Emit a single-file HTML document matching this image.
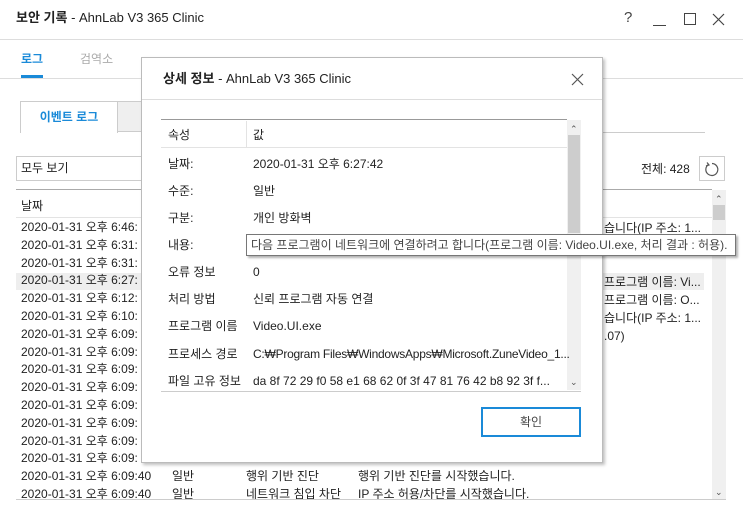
<!DOCTYPE html>
<html><head><meta charset="utf-8"><style>
*{margin:0;padding:0;box-sizing:border-box}
body{width:743px;height:519px;background:#fff;position:relative;overflow:hidden;font-family:"Liberation Sans","Noto Sans CJK KR",sans-serif;font-size:12px;line-height:16px;color:#222}
.a{position:absolute;white-space:nowrap;line-height:16px}
.l{position:absolute;background:#ddd}
</style></head><body>
<div class="a" style="left:16px;top:10px;font-size:13px"><b>보안 기록</b> - AhnLab V3 365 Clinic</div>
<div class="a" style="left:624px;top:10px;font-size:15px;color:#444">?</div>
<div class="l" style="left:653px;top:25px;width:13px;height:1px;background:#444"></div>
<div class="a" style="left:684px;top:13px;width:12px;height:12px;border:1px solid #444"></div>
<svg class="a" style="left:712px;top:13px" width="13" height="13"><path d="M1 1L12 12M12 1L1 12" stroke="#444" stroke-width="1.2"/></svg>
<div class="l" style="left:0;top:39px;width:743px;height:1px"></div>
<div class="a" style="left:21px;top:51px;color:#1a8ad8;font-weight:bold">로그</div>
<div class="a" style="left:80px;top:51px;color:#aaa">검역소</div>
<div class="l" style="left:21px;top:75px;width:22px;height:3px;background:#1a8ad8"></div>
<div class="l" style="left:0;top:78px;width:743px;height:1px"></div>
<div class="a" style="left:20px;top:101px;width:98px;height:32px;border:1px solid #ccc;border-bottom:none;background:#fff;color:#1a8ad8;text-align:center;line-height:30px;font-weight:bold">이벤트 로그</div>
<div class="a" style="left:117px;top:101px;width:40px;height:31px;border:1px solid #ccc;background:#efefef"></div>
<div class="l" style="left:157px;top:132px;width:548px;height:1px;background:#ccc"></div>
<div class="a" style="left:16px;top:156px;width:140px;height:25px;border:1px solid #ccc;line-height:23px;padding-left:4px">모두 보기</div>
<div class="a" style="left:641px;top:161px">전체: 428</div>
<div class="a" style="left:699px;top:156px;width:26px;height:25px;border:1px solid #ccc"></div>
<svg class="a" style="left:703px;top:160px" width="18" height="18"><path d="M5.5 4.5A6 6 0 1 0 9 3.5" fill="none" stroke="#555" stroke-width="1.2"/><path d="M4 2.5L6 5L3 6" fill="none" stroke="#555" stroke-width="1.2"/></svg>
<div class="l" style="left:16px;top:189px;width:696px;height:1px;background:#aaa"></div>
<div class="a" style="left:21px;top:198px">날짜</div>
<div class="l" style="left:16px;top:217px;width:696px;height:1px;background:#e3e3e3"></div>
<div class="a" style="left:712px;top:190px;width:14px;height:309px;background:#f0f0f0"></div>
<div class="a" style="left:713px;top:205px;width:12px;height:15px;background:#cdcdcd"></div>
<div class="a" style="left:715px;top:191px;font-size:9px;color:#555">⌃</div>
<div class="a" style="left:715px;top:484px;font-size:9px;color:#555">⌄</div>
<div class="l" style="left:16px;top:273px;width:688px;height:17px;background:#eee"></div>
<div id="rows"></div>
<div class="l" style="left:16px;top:499px;width:710px;height:1px;background:#ccc"></div>
<div class="a" style="left:604px;top:220px">습니다(IP 주소: 1...</div>
<div class="a" style="left:604px;top:274px">프로그램 이름: Vi...</div>
<div class="a" style="left:604px;top:292px">프로그램 이름: O...</div>
<div class="a" style="left:604px;top:310px">습니다(IP 주소: 1...</div>
<div class="a" style="left:604px;top:328px">.07)</div>

<div class="a" style="left:141px;top:57px;width:462px;height:406px;background:#fff;border:1px solid #bbb;box-shadow:2px 2px 3px rgba(0,0,0,.25)">
 <div class="a" style="left:21px;top:13px;font-size:13px"><b>상세 정보</b> - AhnLab V3 365 Clinic</div>
 <svg class="a" style="left:429px;top:15px" width="13" height="13"><path d="M1 1L12 12M12 1L1 12" stroke="#555" stroke-width="1.2"/></svg>
 <div class="l" style="left:0;top:41px;width:460px;height:1px"></div>
 <div class="l" style="left:19px;top:61px;width:406px;height:1px;background:#999"></div>
 <div class="a" style="left:425px;top:62px;width:14px;height:270px;background:#f0f0f0"></div>
 <div class="a" style="left:426px;top:77px;width:12px;height:98px;background:#cdcdcd"></div>
 <div class="a" style="left:428px;top:63px;font-size:9px;color:#555">⌃</div>
 <div class="a" style="left:428px;top:316px;font-size:9px;color:#555">⌄</div>
 <div class="l" style="left:104px;top:63px;width:1px;height:26px;background:#e3e3e3"></div>
 <div class="l" style="left:19px;top:89px;width:406px;height:1px;background:#e3e3e3"></div>
 <div class="a" style="left:26px;top:69px">속성</div><div class="a" style="left:111px;top:69px">값</div>
 <div class="a" style="left:26px;top:98px">날짜:</div><div class="a" style="left:111px;top:98px">2020-01-31 오후 6:27:42</div>
 <div class="a" style="left:26px;top:125px">수준:</div><div class="a" style="left:111px;top:125px">일반</div>
 <div class="a" style="left:26px;top:152px">구분:</div><div class="a" style="left:111px;top:152px">개인 방화벽</div>
 <div class="a" style="left:26px;top:179px">내용:</div>
 <div class="a" style="left:26px;top:206px">오류 정보</div><div class="a" style="left:111px;top:206px">0</div>
 <div class="a" style="left:26px;top:233px">처리 방법</div><div class="a" style="left:111px;top:233px">신뢰 프로그램 자동 연결</div>
 <div class="a" style="left:26px;top:260px">프로그램 이름</div><div class="a" style="left:111px;top:260px">Video.UI.exe</div>
 <div class="a" style="left:26px;top:288px">프로세스 경로</div><div class="a" style="left:111px;top:288px;letter-spacing:-0.25px">C:₩Program Files₩WindowsApps₩Microsoft.ZuneVideo_1...</div>
 <div class="a" style="left:26px;top:315px">파일 고유 정보</div><div class="a" style="left:111px;top:315px">da 8f 72 29 f0 58 e1 68 62 0f 3f 47 81 76 42 b8 92 3f f...</div>
 <div class="l" style="left:19px;top:333px;width:420px;height:1px;background:#ccc"></div>
 <div class="a" style="left:339px;top:349px;width:100px;height:30px;border:2px solid #1a8ad8;text-align:center;line-height:26px;color:#444">확인</div>
</div>
<div class="a" style="left:246px;top:234px;width:490px;height:22px;border:1px solid #777;background:#fff;line-height:20px;padding-left:4px;color:#444;box-shadow:2px 2px 2px rgba(0,0,0,.3)">다음 프로그램이 네트워크에 연결하려고 합니다(프로그램 이름: Video.UI.exe, 처리 결과 : 허용).</div>
<script>
var t=["6:46:","6:31:","6:31:","6:27:","6:12:","6:10:","6:09:","6:09:","6:09:","6:09:","6:09:","6:09:","6:09:","6:09:"],h="";
for(var i=0;i<16;i++){var y=219+i*17.8;var tm=i<14?t[i]:"6:09:40";h+='<div class="a" style="left:21px;top:'+y+'px">2020-01-31 오후 '+tm+'</div>';}
h+='<div class="a" style="left:172px;top:468px">일반</div><div class="a" style="left:246px;top:468px">행위 기반 진단</div><div class="a" style="left:358px;top:468px">행위 기반 진단를 시작했습니다.</div>';
h+='<div class="a" style="left:172px;top:486px">일반</div><div class="a" style="left:246px;top:486px">네트워크 침입 차단</div><div class="a" style="left:358px;top:486px">IP 주소 허용/차단를 시작했습니다.</div>';
document.getElementById("rows").innerHTML=h;
</script>
</body></html>
